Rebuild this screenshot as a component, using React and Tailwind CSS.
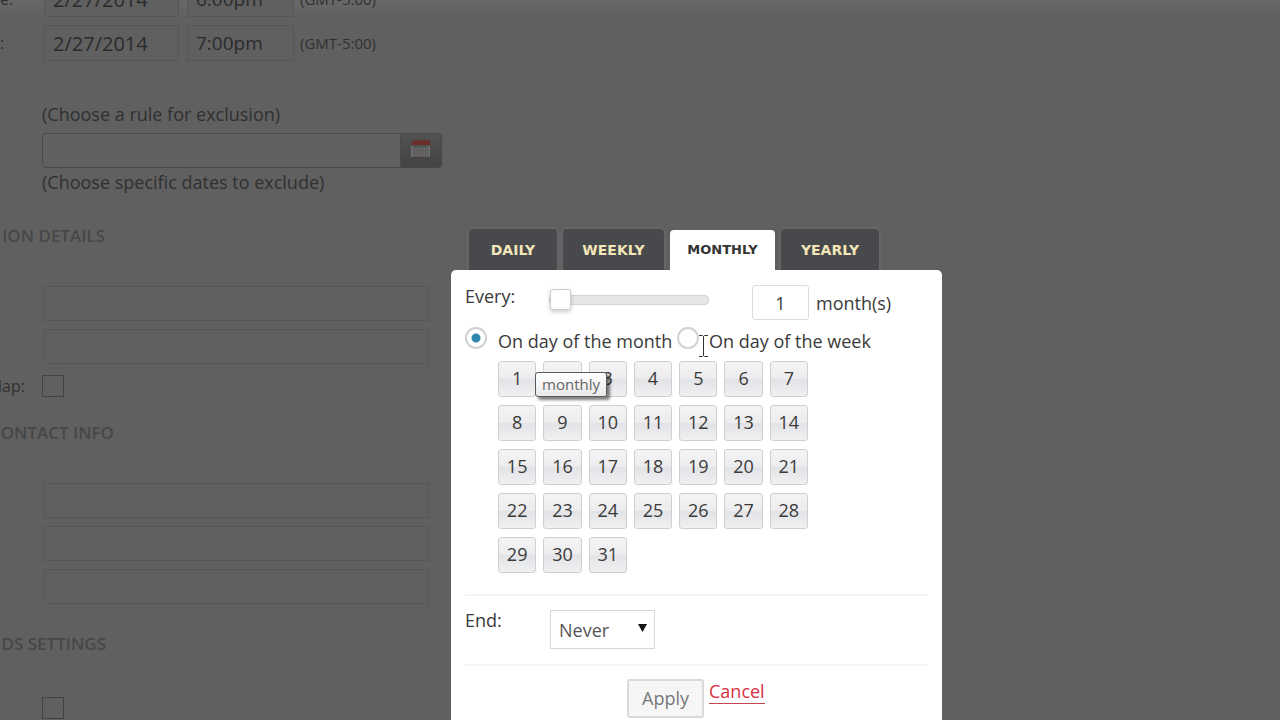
import { useState } from 'react';

const TABS = [
  { name: 'Daily', width: 'w-[88px]' },
  { name: 'Weekly', width: 'w-[101px]' },
  { name: 'Monthly', width: 'w-[105px]' },
  { name: 'Yearly', width: 'w-[98px]' },
];
const DAYS = Array.from({ length: 31 }, (_, i) => i + 1);

const darkField = 'border border-[#575757] bg-[#606060] text-[#2b2b2b]';

function CalendarIcon() {
  return (
    <svg width="22" height="22" viewBox="0 0 22 22" aria-hidden="true">
      <path d="M3 2h17v5H1z" fill="#6e2c28" />
      <path d="M5 2v2M9 2v2M13 2v2M17 2v2" stroke="#4a4444" strokeWidth="1" />
      <path d="M1.500 7.500h18v12h-18z" fill="#626262" />
      <path d="M1.500 8v11M19.500 8v11" stroke="#747474" />
      <path d="M1.500 19.500h18" stroke="#4e3a3a" />
      <path d="M4 8.500h13" stroke="#39564a" />
      <path d="M5 12.500h11" stroke="#585858" />
    </svg>
  );
}

function DateRow({ label, name, date, time }) {
  return (
    <div className="flex h-9 items-center">
      <label htmlFor={name} className="mr-8 w-3 shrink-0 text-base">{label}</label>
      <input id={name} defaultValue={date} className={`h-9 w-[135px] px-2 text-xl ${darkField}`} />
      <input aria-label="Time" defaultValue={time} className={`ml-2 h-9 w-[107px] px-2 text-[19px] ${darkField}`} />
      <span className="ml-[6px] text-[15px]">(GMT-5:00)</span>
    </div>
  );
}

function SectionTitle({ children, className }) {
  return (
    <h2 className={`flex justify-end overflow-hidden text-[17px] leading-6 font-semibold whitespace-nowrap text-[#474747] ${className}`}>
      {children}
    </h2>
  );
}

function FieldGroup({ labels }) {
  return (
    <div className="mt-[38px] ml-11 flex flex-col gap-2">
      {labels.map((label) => (
        <input key={label} aria-label={label} className={`h-[35px] w-[385px] px-2 ${darkField}`} />
      ))}
    </div>
  );
}

function EventForm() {
  return (
    <form className="-mt-[19px] flex flex-col text-[#303030]">
      <div className="flex flex-col gap-2">
        <DateRow label="e:" name="start" date="2/27/2014" time="6:00pm" />
        <DateRow label=":" name="end" date="2/27/2014" time="7:00pm" />
      </div>

      <p className="mt-[41px] ml-[42px] text-lg leading-6">(Choose a rule for exclusion)</p>
      <div className="mt-[7px] ml-[42px] flex h-[35px] w-[400px]">
        <input aria-label="Excluded dates" className="min-w-0 flex-1 rounded-l-sm border border-[#4a4a4a] bg-[#606060] px-2" />
        <button type="button" aria-label="Pick dates" className="flex w-[41px] justify-center rounded-r-sm border border-l-0 border-[#484848] bg-linear-to-b from-[#525252] to-[#434343] pt-1">
          <CalendarIcon />
        </button>
      </div>
      <p className="mt-[2px] ml-[42px] text-lg leading-6">(Choose specific dates to exclude)</p>

      <SectionTitle className="mt-[30px] w-[105px]">ION DETAILS</SectionTitle>
      <FieldGroup labels={['Venue', 'Address']} />
      <div className="mt-[11px] flex h-[22px] items-center">
        <label htmlFor="map" className="mr-[17px] flex w-[25px] justify-end overflow-hidden text-base">Map:</label>
        <input id="map" type="checkbox" className="size-[22px] appearance-none border border-[#444444]" />
      </div>

      <SectionTitle className="mt-6 w-[114px]">ONTACT INFO</SectionTitle>
      <FieldGroup labels={['Name', 'Phone', 'Email']} />

      <SectionTitle className="mt-7 w-[106px]">DS SETTINGS</SectionTitle>
      <input type="checkbox" aria-label="Enabled" className="mt-[41px] ml-[42px] size-[22px] appearance-none border border-[#444444]" />
    </form>
  );
}

function Tabs({ active, onChange }) {
  return (
    <div role="tablist" className="ml-[18px] flex h-[41px] items-end gap-[6px]">
      {TABS.map(({ name, width }) => (
        <button
          key={name}
          type="button"
          role="tab"
          aria-selected={name === active}
          onClick={() => onChange(name)}
          className={`rounded-t font-bold uppercase font-['DejaVu_Sans',Verdana,sans-serif] ${width} ${
            name === active
              ? 'h-10 bg-white text-[13px] text-[#333333]'
              : 'h-[41px] bg-[#48494c] text-sm text-[#f3e6b8] shadow-[0_0_0_2px_#666666]'
          }`}
        >
          {name}
        </button>
      ))}
    </div>
  );
}

function Radio({ id, checked, onChange }) {
  return (
    <input
      id={id}
      type="radio"
      name="mode"
      checked={checked}
      onChange={onChange}
      className="size-[22px] shrink-0 appearance-none rounded-full border-2 border-[#d2d2d2] bg-white checked:bg-[radial-gradient(circle,#2f86ad_4px,#ffffff_5px)]"
    />
  );
}

function DayGrid() {
  const [picked, setPicked] = useState([]);
  const toggle = (day) =>
    setPicked(picked.includes(day) ? picked.filter((d) => d !== day) : [...picked, day]);

  return (
    <div className="relative mt-3 ml-[33px] grid w-[310px] grid-cols-7 gap-x-[7px] gap-y-2">
      {DAYS.map((day) => (
        <button
          key={day}
          type="button"
          aria-pressed={picked.includes(day)}
          onClick={() => toggle(day)}
          className="h-9 rounded-[3px] border border-[#cfcfd1] bg-[linear-gradient(#f4f4f5,#ececee_50%,#e2e3e6_50%,#f0f0f2)] pb-[2px] text-lg leading-none text-[#3a3a3a] aria-pressed:border-[#2f86ad]"
        >
          {day}
        </button>
      ))}
      <span role="tooltip" className="absolute top-[11px] left-[37px] flex h-[25px] w-[72px] items-center justify-center rounded-[3px] border border-[#5a5a5a] bg-linear-to-b from-white to-[#e9e9ec] text-[15px] text-[#666666] shadow-[3px_3px_3px_#00000080]">
        monthly
      </span>
    </div>
  );
}

function RecurrenceDialog() {
  const [tab, setTab] = useState('Monthly');
  const [mode, setMode] = useState('month');
  const [every, setEvery] = useState(1);

  return (
    <div role="dialog" aria-label="Repeat" className="flex w-[491px] shrink-0 flex-col">
      <Tabs active={tab} onChange={setTab} />
      <div className="relative rounded-[5px] bg-white px-[14px] pt-[15px] pb-8 text-lg text-[#3a3a3a]">
        <div className="flex h-[34px] items-start">
          <label htmlFor="every" className="w-[84px] leading-[22px]">Every:</label>
          <input
            id="every"
            type="range"
            min="1"
            max="12"
            value={every}
            onChange={(e) => setEvery(Number(e.target.value))}
            className="mt-1 h-[22px] w-[160px] appearance-none bg-transparent [&::-webkit-slider-runnable-track]:h-[10px] [&::-webkit-slider-runnable-track]:rounded [&::-webkit-slider-runnable-track]:border [&::-webkit-slider-runnable-track]:border-[#d3d3d3] [&::-webkit-slider-runnable-track]:bg-[#e6e6e6] [&::-webkit-slider-thumb]:-mt-[7px] [&::-webkit-slider-thumb]:size-[21px] [&::-webkit-slider-thumb]:appearance-none [&::-webkit-slider-thumb]:rounded-[3px] [&::-webkit-slider-thumb]:border [&::-webkit-slider-thumb]:border-[#cccccc] [&::-webkit-slider-thumb]:bg-white [&::-webkit-slider-thumb]:shadow-[0_2px_4px_#00000033]"
          />
          <input
            aria-label="Months"
            value={every}
            onChange={(e) => setEvery(Number(e.target.value) || 1)}
            className="ml-[43px] h-[35px] w-[57px] rounded-[3px] border border-[#dcdcdc] text-center"
          />
          <span className="ml-[7px] leading-9">month(s)</span>
        </div>

        <div className="relative mt-2 flex h-[22px] items-center">
          <Radio id="by-month" checked={mode === 'month'} onChange={() => setMode('month')} />
          <label htmlFor="by-month" className="mt-[5px] ml-[11px] w-[179px] whitespace-nowrap">On day of the month</label>
          <Radio id="by-week" checked={mode === 'week'} onChange={() => setMode('week')} />
          <label htmlFor="by-week" className="mt-[5px] ml-[10px] whitespace-nowrap">On day of the week</label>
          <svg className="absolute top-2 left-[234px]" width="9" height="22" viewBox="0 0 9 22" aria-hidden="true">
            <path d="M0 .5h3.500l1 1 1-1H9M4.500 1v20M0 21.500h3.500l1-1 1 1H9" fill="none" stroke="#333333" />
          </svg>
        </div>

        <DayGrid />

        <div className="mt-[21px] flex h-[72px] items-start border-y-2 border-[#f5f5f5] pt-[14px]">
          <label htmlFor="finish" className="w-[85px] leading-5">End:</label>
          <div className="relative">
            <select id="finish" className="h-[39px] w-[105px] appearance-none border border-[#d8d8d8] bg-white px-2 text-[#555555]">
              <option>Never</option>
              <option>After</option>
              <option>On</option>
            </select>
            <svg className="pointer-events-none absolute top-[14px] right-2" width="9" height="8" viewBox="0 0 9 8" aria-hidden="true">
              <path d="M0 0h9L4.500 8z" fill="#111111" />
            </svg>
          </div>
        </div>

        <div className="mt-[13px] ml-[162px] flex items-start gap-[5px]">
          <button type="button" className="h-[39px] w-[77px] rounded-[3px] border-2 border-[#dadada] bg-[#f6f6f6] pb-[2px] text-[#777777]">
            Apply
          </button>
          <a href="#cancel" className="border-b border-[#c4444f] leading-6 text-[#d9303f]">Cancel</a>
        </div>
      </div>
    </div>
  );
}

export default function App() {
  return (
    <div className="relative h-screen overflow-hidden bg-[#606060] bg-[linear-gradient(#686868,#606060_18px)] font-['Open_Sans','Noto_Sans',sans-serif]">
      <EventForm />
      <div className="absolute inset-0 flex justify-center pt-[229px] pl-[113px]">
        <RecurrenceDialog />
      </div>
    </div>
  );
}
